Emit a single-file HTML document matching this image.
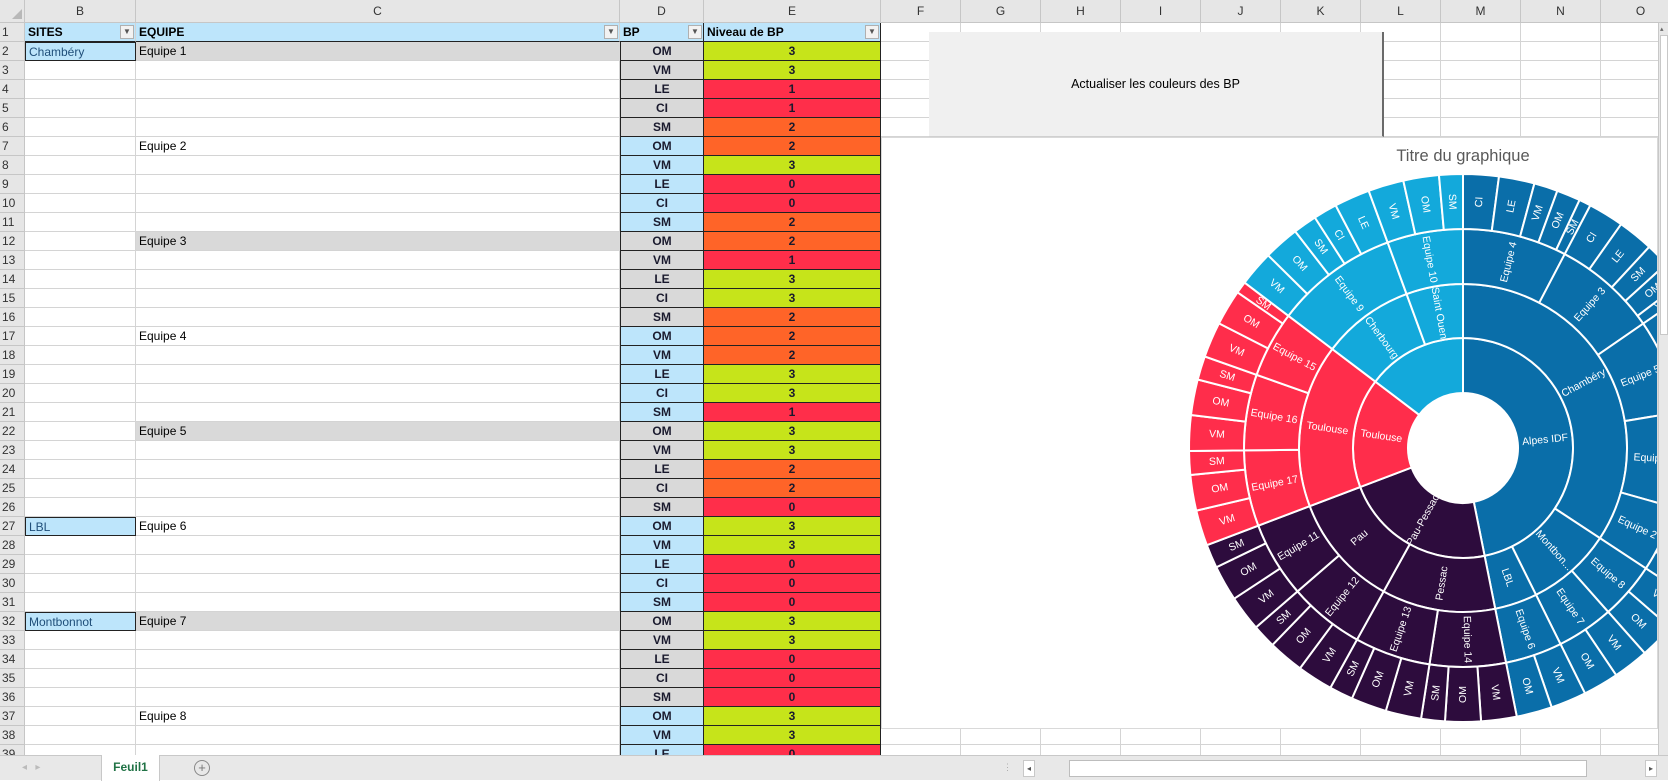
<!DOCTYPE html>
<html><head><meta charset="utf-8">
<style>
*{box-sizing:border-box;margin:0;padding:0}
body{width:1668px;height:780px;overflow:hidden;background:#fff;font-family:"Liberation Sans",sans-serif;position:relative}
.c{position:absolute;border-right:1px solid #d4d4d4;border-bottom:1px solid #d4d4d4;font-size:12px;line-height:18px;white-space:nowrap;overflow:hidden;padding-left:3px;color:#000}
.h{background:#e6e6e6;color:#333;text-align:center;padding:0;border-color:#c6c6c6;font-size:12px}
.rh{background:#e6e6e6;color:#333;padding-left:2px;text-align:left;border-color:#c6c6c6}
.bk{border-right:1px solid #222;border-bottom:1px solid #222;text-align:center;font-weight:bold;padding:0;color:#1a1a2e}
.dd{position:absolute;right:1px;top:2px;width:14px;height:14px;background:#f2f2f2;border:1px solid #b0b0b0;font-size:8px;line-height:12px;text-align:center;color:#555;font-weight:normal}
#btn{position:absolute;left:929px;top:32px;width:455px;height:105px;background:#f0f0f0;border-right:2px solid #6a6a6a;border-bottom:1px solid #d0d0d0;font-size:12.5px;color:#000;display:flex;align-items:center;justify-content:center}
#chart{position:absolute;left:881px;top:137px;width:777px;height:592px;background:#fff;border:1px solid #d9d9d9;overflow:hidden}
#tabs{position:absolute;left:0;top:755px;width:1668px;height:25px;background:#e8e8e8;border-top:1px solid #c8c8c8}
#vs{position:absolute;left:1658px;top:23px;width:10px;height:732px;background:#e8e8e8;border-left:1px solid #c8c8c8}
</style></head><body>
<div id="grid"></div>
<div id="btn">Actualiser les couleurs des BP</div>
<div id="chart"><svg id="sv" width="777" height="592" xmlns="http://www.w3.org/2000/svg"><text x="581" y="18" text-anchor="middle" dominant-baseline="central" font-family="Liberation Sans, sans-serif" font-size="16.5" fill="#595959">Titre du graphique</text></svg></div>
<div id="vs"><div style="position:absolute;left:1px;top:2px;width:8px;height:8px;font-size:7px;color:#666">▴</div><div style="position:absolute;left:1px;top:12px;width:8px;height:300px;background:#fff;border:1px solid #c8c8c8"></div></div>
<div id="tabs">
 <div style="position:absolute;left:22px;top:6px;font-size:10px;color:#bbb">◂ &nbsp; ▸</div>
 <div style="position:absolute;left:101px;top:-1px;width:59px;height:26px;background:#fff;border-left:1px solid #c8c8c8;border-right:1px solid #c8c8c8;color:#217346;font-weight:bold;font-size:12px;text-align:center;line-height:24px">Feuil1</div>
 <div style="position:absolute;left:194px;top:4px;width:16px;height:16px;border:1px solid #888;border-radius:50%;color:#777;font-size:13px;line-height:13px;text-align:center">+</div>
 <div style="position:absolute;left:1003px;top:6px;font-size:9px;color:#aaa">⋮</div>
 <div style="position:absolute;left:1023px;top:4px;width:12px;height:17px;background:#fff;border:1px solid #c8c8c8;font-size:8px;line-height:15px;text-align:center;color:#555">◂</div>
 <div style="position:absolute;left:1069px;top:4px;width:518px;height:17px;background:#fff;border:1px solid #bdbdbd"></div>
 <div style="position:absolute;left:1645px;top:4px;width:12px;height:17px;background:#fff;border:1px solid #c8c8c8;font-size:8px;line-height:15px;text-align:center;color:#555">▸</div>
</div>
<script>
(function(){
var cols=[0,25,136,620,704,881,961,1041,1121,1201,1281,1361,1441,1521,1601,1681];
var names=["","B","C","D","E","F","G","H","I","J","K","L","M","N","O"];
var g=document.getElementById('grid'),h='';
function cell(x,y,w,hh,cls,st,txt){h+='<div class="c '+cls+'" style="left:'+x+'px;top:'+y+'px;width:'+w+'px;height:'+hh+'px;'+st+'">'+txt+'</div>';}
for(var i=0;i<15;i++){cell(cols[i],0,cols[i+1]-cols[i],23,'h','line-height:22px',names[i]);}
h+='<div style="position:absolute;left:12px;top:9px;width:0;height:0;border-left:10px solid transparent;border-bottom:10px solid #b8b8b8"></div>';
var G='#c6e41a',R='#ff2e4a',O='#ff6428',LB='#bde5fb',GR='#d9d9d9';
var bp=['OM','VM','LE','CI','SM'];
var vals=[3,3,1,1,2, 2,3,0,0,2, 2,1,3,3,2, 2,2,3,3,1, 3,3,2,2,0, 3,3,0,0,0, 3,3,0,0,0, 3,3,0];
var sites={2:'Chambéry',27:'LBL',32:'Montbonnot'};
var eq={2:1,7:2,12:3,17:4,22:5,27:6,32:7,37:8};
var grayC={2:1,12:1,22:1,32:1};
function rowTop(r){return 23+(r-1)*19;}
for(var r=1;r<=39;r++){
 var y=rowTop(r);
 cell(0,y,25,19,'rh','',r);
 if(r==1){
  var hd=['SITES','EQUIPE','BP','Niveau de BP'];
  for(var k=1;k<=4;k++){var bd=(k>=3)?'border-right:1px solid #222;border-bottom:1px solid #222;':'border-bottom:1px solid #222;';cell(cols[k],y,cols[k+1]-cols[k],19,'','background:'+LB+';font-weight:bold;'+bd,hd[k-1]+'<span class="dd">▼</span>');}
 } else {
  var s=sites[r];
  cell(cols[1],y,111,19,'',s?'background:'+LB+';color:#1f4e79;border:1px solid #222;':'',s||'');
  cell(cols[2],y,484,19,'',grayC[r]?'background:'+GR+';border-right-color:'+GR+';':'',eq[r]?'Equipe '+eq[r]:'');
  var blk=Math.floor((r-2)/5);
  cell(cols[3],y,84,19,'bk','background:'+(blk%2?LB:GR)+';border-left:1px solid #222;',bp[(r-2)%5]);
  var v=vals[r-2];
  cell(cols[4],y,177,19,'bk','background:'+(v==3?G:(v==0||v==1?R:O))+';',v);
 }
 for(var k2=5;k2<15;k2++)cell(cols[k2],y,80,19,'','','');
}
g.innerHTML=h;
var data=[
 ['Alpes IDF','#0a6ea9',[
  ['Chambéry',[['Equipe 4',[['CI',3],['LE',3],['VM',2],['OM',2],['SM',1]]],['Equipe 3',[['CI',3],['LE',3],['SM',2],['OM',2],['VM',1]]],['Equipe 5',[['OM',3],['VM',3],['LE',2],['CI',2]]],['Equipe 1',[['OM',3],['VM',3],['SM',2],['LE',1],['CI',1]]],['Equipe 2',[['VM',3],['OM',2],['SM',2]]]]],
  ['Montbon...',[['Equipe 8',[['VM',3],['OM',3]]],['Equipe 7',[['VM',3],['OM',3]]]]],
  ['LBL',[['Equipe 6',[['VM',3],['OM',3]]]]]]],
 ['Pau-Pessac','#2d0c3d',[
  ['Pessac',[['Equipe 14',[['VM',3],['OM',3],['SM',2]]],['Equipe 13',[['VM',3],['OM',3],['SM',2]]]]],
  ['Pau',[['Equipe 12',[['VM',3],['OM',3],['SM',2]]],['Equipe 11',[['VM',3],['OM',3],['SM',2]]]]]]],
 ['Toulouse','#ff2d4b',[
  ['Toulouse',[['Equipe 17',[['VM',3],['OM',3],['SM',2]]],['Equipe 16',[['VM',3],['OM',3],['SM',2]]],['Equipe 15',[['VM',3],['OM',3],['SM',1]]]]]]],
 ['','#13a9db',[
  ['Cherbourg',[['Equipe 9',[['VM',3],['OM',3],['SM',2],['CI',2],['LE',3]]]]],
  ['Saint Ouen',[['Equipe 10',[['VM',3],['OM',3],['SM',2]]]]]]]
];
var cx=581,cy=310,RR=[55,110,164,219,274];
function sum(n){if(typeof n[1]=='number')return n[1];var ch=n[n.length-1],s=0;for(var i=0;i<ch.length;i++)s+=sum(ch[i]);return s;}
var total=0;data.forEach(function(d){total+=sum([d[0],d[2]]);});
var sv=document.getElementById('sv'),o='',lb='';
function P(r,a){a=a*Math.PI/180;return (cx+r*Math.sin(a)).toFixed(2)+' '+(cy-r*Math.cos(a)).toFixed(2);}
function arc(a0,a1,r0,r1,col){
 var lg=(a1-a0)>180?1:0;
 o+='<path d="M'+P(r1,a0)+' A'+r1+' '+r1+' 0 '+lg+' 1 '+P(r1,a1)+' L'+P(r0,a1)+' A'+r0+' '+r0+' 0 '+lg+' 0 '+P(r0,a0)+'Z" fill="'+col+'" stroke="#fff" stroke-width="2"/>';
}
function lab(t,a0,a1,lv){
 if(!t)return;var m=(a0+a1)/2,rm=(RR[lv]+RR[lv+1])/2;
 var am=m*Math.PI/180,x=cx+rm*Math.sin(am),y=cy-rm*Math.cos(am);
 var rot=m<180?m-90:m-270;
 var span=(a1-a0)*Math.PI/180*rm; if(span<9)return;
 lb+='<text x="'+x.toFixed(2)+'" y="'+y.toFixed(2)+'" transform="rotate('+rot.toFixed(2)+' '+x.toFixed(2)+' '+y.toFixed(2)+')" text-anchor="middle" dominant-baseline="central" font-family="Liberation Sans, sans-serif" font-size="10.5" fill="#fff">'+t+'</text>';
}
var a=0;
function walk(n,lv,col){
 var v=sum(n),a0=a,a1=a+v/total*360;
 arc(a0,a1,RR[lv],RR[lv+1],col);
 if(typeof n[1]!='number'){var ch=n[n.length-1];ch.forEach(function(c){walk(c,lv+1,col);});}
 a=a1;
 lab(n[0],a0,a1,lv);
}
data.forEach(function(d){walk([d[0],d[2]],0,d[1]);});
sv.insertAdjacentHTML('beforeend',o+lb);
})();
</script>
</body></html>
